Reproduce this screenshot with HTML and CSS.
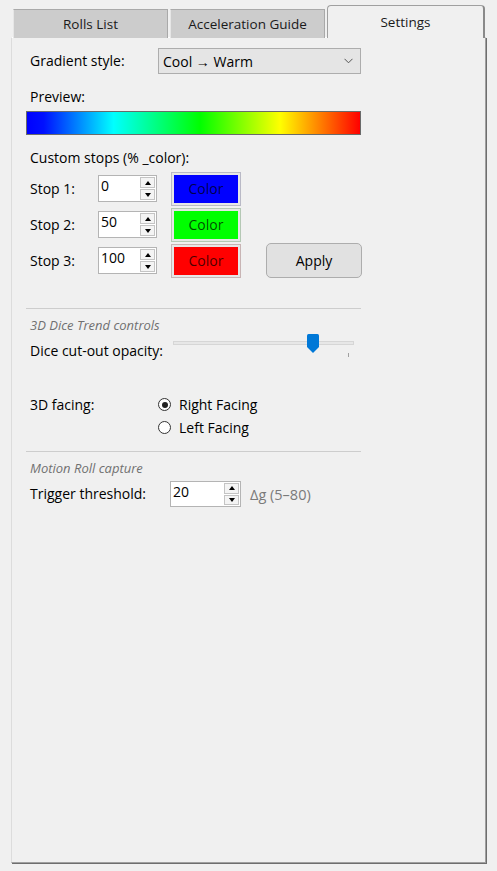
FILE: index.html
```html
<!DOCTYPE html>
<html>
<head>
<meta charset="utf-8">
<link rel="stylesheet" href="styles.css">
</head>
<body>
<div class="tabs">
  <div class="tab">Rolls List</div>
  <div class="tab">Acceleration Guide</div>
  <div class="tab active">Settings</div>
</div>
<div class="panel">
  <div class="row-style">
    <span class="lbl">Gradient style:</span>
    <div class="combo"><span>Cool → Warm</span>
      <svg class="chev" width="9" height="6" viewBox="0 0 9 6"><path d="M0.5 0.8 L4.5 4.8 L8.5 0.8" fill="none" stroke="#555" stroke-width="1"/></svg>
    </div>
  </div>
  <div class="lbl preview-lbl">Preview:</div>
  <div class="gradbar"></div>
  <div class="lbl stops-lbl">Custom stops (% _color):</div>
  <div class="stops">
    <span class="lbl">Stop 1:</span>
    <div class="spin"><span class="val">0</span><div class="arrows"><div class="ab"><i class="up"></i></div><div class="ab"><i class="dn"></i></div></div></div>
    <div class="cbtn blue-b"><div class="cin blue">Color</div></div>
    <div></div>
    <span class="lbl">Stop 2:</span>
    <div class="spin"><span class="val">50</span><div class="arrows"><div class="ab"><i class="up"></i></div><div class="ab"><i class="dn"></i></div></div></div>
    <div class="cbtn green-b"><div class="cin green">Color</div></div>
    <div></div>
    <span class="lbl">Stop 3:</span>
    <div class="spin"><span class="val">100</span><div class="arrows"><div class="ab"><i class="up"></i></div><div class="ab"><i class="dn"></i></div></div></div>
    <div class="cbtn red-b"><div class="cin red">Color</div></div>
    <div class="apply">Apply</div>
  </div>
  <div class="sep sep1"></div>
  <div class="group-title t1">3D Dice Trend controls</div>
  <div class="row-slider">
    <span class="lbl">Dice cut-out opacity:</span>
    <div class="slider">
      <div class="track"></div>
      <svg class="thumb" width="12" height="19" viewBox="0 0 12 19"><path d="M0 1.5 Q0 0 1.5 0 H10.5 Q12 0 12 1.5 V13 L6 19 L0 13 Z" fill="#0078d7"/></svg>
      <div class="tick"></div>
    </div>
  </div>
  <div class="row-facing">
    <span class="lbl">3D facing:</span>
    <div class="radios">
      <div class="radio"><span class="rc on"></span>Right Facing</div>
      <div class="radio"><span class="rc"></span>Left Facing</div>
    </div>
  </div>
  <div class="sep sep2"></div>
  <div class="group-title t2">Motion Roll capture</div>
  <div class="row-trigger">
    <span class="lbl">Trigger threshold:</span>
    <div class="spin spin-wide"><span class="val">20</span><div class="arrows"><div class="ab"><i class="up"></i></div><div class="ab"><i class="dn"></i></div></div></div>
    <span class="unit">Δg (5–80)</span>
  </div>
</div>
</body>
</html>
```
FILE: styles.css
```css
* { box-sizing: border-box; }
html, body { margin: 0; padding: 0; }
body {
  width: 497px;
  height: 871px;
  background: #f0f0f0;
  font-family: "Open Sans", "Noto Sans", sans-serif;
  font-size: 14px;
  color: #000;
  overflow: hidden;
}
.tabs {
  display: flex;
  align-items: flex-end;
  height: 38px;
  padding-left: 13px;
  gap: 2px;
  position: relative;
  z-index: 1;
}
.tab {
  width: 155px;
  height: 29px;
  background: #cccccc;
  border: 1px solid #a9a9a9;
  border-bottom: none;
  border-left-color: #e6e6e6;
  display: flex;
  align-items: center;
  justify-content: center;
  color: #1a1a1a;
  font-size: 13.5px;
}
.tab.active {
  width: 158px;
  height: 33px;
  background: #f0f0f0;
  border: 1px solid #a0a0a0;
  border-bottom: none;
  border-radius: 4px 4px 0 0;
  padding-bottom: 1px;
  border-right: 2px solid #8a8a8a;
}
.panel {
  margin-left: 11px;
  margin-top: -1px;
  width: 475px;
  height: 826px;
  border-top: 1px solid #ffffff;
  border-left: 1px solid #dcdcdc;
  border-right: 1px solid #a0a0a0;
  border-bottom: 1px solid #a0a0a0;
  box-shadow: 1px 1px 0 #6e6e6e;
  padding: 10px 0 0 14px;
}
.lbl { display: block; padding-left: 4px; line-height: 18px; white-space: nowrap; }
.row-style {
  display: flex;
  align-items: center;
  width: 335px;
  height: 26px;
}
.row-style .lbl { width: 132px; }
.combo {
  width: 203px;
  height: 26px;
  background: #e5e5e5;
  border: 1px solid #adadad;
  display: flex;
  align-items: center;
  justify-content: space-between;
  padding: 0 7px 0 4px;
}
.preview-lbl { margin-top: 14px; }
.gradbar {
  margin-top: 5px;
  width: 335px;
  height: 24px;
  border: 1px solid #6a6a6a;
  background: linear-gradient(to right, #0000ff 0%, #0010ff 5%, #00ffff 26%, #00ff00 52%, #ffff00 76%, #ff0000 100%);
}
.stops-lbl { margin-top: 14px; }
.stops {
  margin-top: 5px;
  display: grid;
  grid-template-columns: 72px 73px 95px 96px;
  row-gap: 3px;
  grid-auto-rows: 33px;
  align-items: center;
  width: 336px;
}
.spin {
  width: 59px;
  height: 27px;
  background: #fff;
  border: 1px solid #b4b4b4;
  display: flex;
  justify-content: space-between;
  padding: 1px 1px 1px 2px;
}
.spin .val { line-height: 18px; font-size: 14px; }
.arrows { width: 15px; display: flex; flex-direction: column; gap: 1px; }
.ab {
  flex: 1;
  border: 1px solid #c4c4c4;
  background: #f4f4f4;
  display: flex;
  align-items: center;
  justify-content: center;
}
.ab i { width: 0; height: 0; border-left: 3px solid transparent; border-right: 3px solid transparent; }
.ab i.up { border-bottom: 4px solid #000; }
.ab i.dn { border-top: 4px solid #000; }
.cbtn {
  width: 70px;
  height: 34px;
  border: 1px solid #b9b9c6;
  background: #e6e6e6;
  padding: 2px;
}
.green-b { border-color: #b4c8b4; }
.red-b { border-color: #c8b4b4; }
.cin {
  width: 100%;
  height: 100%;
  display: flex;
  align-items: center;
  justify-content: center;
  color: rgba(0,0,0,0.72);
  font-size: 14px;
}
.blue { background: #0000ff; }
.green { background: #00ff00; }
.red { background: #ff0000; }
.apply {
  width: 96px;
  height: 35px;
  border: 1px solid #adadad;
  border-radius: 5px;
  background: #e1e1e1;
  display: flex;
  align-items: center;
  justify-content: center;
  font-size: 14px;
}
.sep { width: 335px; height: 1px; background: #cdcdcd; }
.sep1 { margin-top: 31px; }
.group-title {
  padding-left: 4px;
  font-style: italic;
  font-size: 13px;
  line-height: 16px;
  color: #707070;
}
.t1 { margin-top: 8px; }
.row-slider {
  display: flex;
  align-items: flex-start;
  height: 24px;
  margin-top: 1px;
}
.row-slider .lbl { width: 147px; margin-top: 8px; }
.slider { position: relative; width: 182px; height: 24px; }
.track {
  position: absolute;
  left: 0; top: 7px;
  width: 181px; height: 4px;
  background: #e7e7e7;
  border: 1px solid #d6d6d6;
}
.thumb { position: absolute; left: 134px; top: 0; }
.tick { position: absolute; left: 175px; top: 19px; width: 1px; height: 4px; background: #a0a0a0; }
.row-facing {
  display: flex;
  align-items: flex-start;
  margin-top: 35px;
}
.row-facing .lbl { width: 132px; line-height: 23px; }
.radios { display: flex; flex-direction: column; }
.radio { display: flex; align-items: center; height: 23px; }
.rc {
  width: 13px; height: 13px;
  border: 1px solid #333;
  border-radius: 50%;
  background: #fff;
  margin-right: 8px;
  position: relative;
}
.rc.on::after {
  content: "";
  position: absolute;
  left: 2.5px; top: 2.5px;
  width: 6px; height: 6px;
  border-radius: 50%;
  background: #222;
}
.sep2 { margin-top: 12px; }
.t2 { margin-top: 8px; }
.row-trigger {
  display: flex;
  align-items: center;
  margin-top: 5px;
  height: 26px;
}
.row-trigger .lbl { width: 144px; }
.spin-wide { width: 71px; height: 26px; }
.unit { margin-left: 9px; color: #7a7a7a; font-size: 14.5px; }
```
